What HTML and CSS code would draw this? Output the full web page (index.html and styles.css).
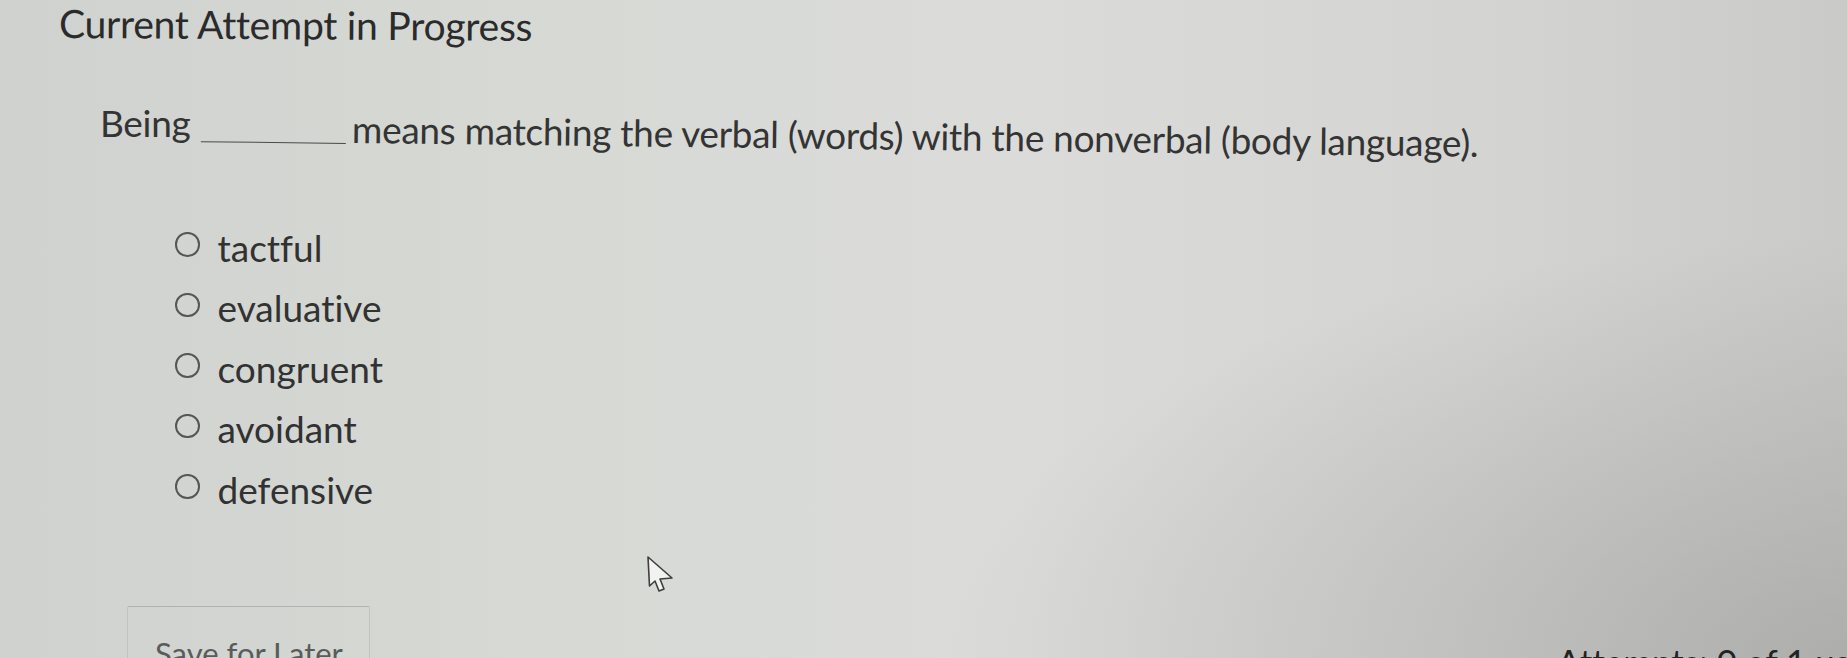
FILE: index.html
```html
<!DOCTYPE html>
<html lang="en">
<head>
<meta charset="utf-8">
<title>Current Attempt in Progress</title>
<link rel="stylesheet" href="styles.css">
</head>
<body>
<main class="page">
  <h1 class="title"><span class="title-text">Current Attempt in Progress</span></h1>
  <p class="question"><span class="lead">Being</span><span class="rest"><span class="blank"></span>means matching the verbal (words) with the nonverbal (body language).</span></p>
  <ul class="options">
    <li class="option"><span class="radio"></span><span class="label">tactful</span></li>
    <li class="option"><span class="radio"></span><span class="label">evaluative</span></li>
    <li class="option"><span class="radio"></span><span class="label">congruent</span></li>
    <li class="option"><span class="radio"></span><span class="label">avoidant</span></li>
    <li class="option"><span class="radio"></span><span class="label">defensive</span></li>
  </ul>
  <div class="footer">
    <button class="save" type="button">Save for Later</button>
    <div class="attempts">Attempts: 0 of 1 used</div>
  </div>
</main>
<svg class="cursor" width="30" height="40" viewBox="0 0 30 40" aria-hidden="true">
  <path d="M2 2 L3.5 31 L9 26 L13 36 L18 34 L14 24 L26 23 Z" fill="#f2f3f1" stroke="#3d3e3d" stroke-width="1.6" stroke-linejoin="round"/>
</svg>
</body>
</html>
```

FILE: styles.css
```css
html, body {
  margin: 0;
  padding: 0;
  height: 658px;
  overflow: hidden;
}

body {
  position: relative;
  font-family: Lato, "Open Sans", sans-serif;
  font-variant-ligatures: none;
  color: #2f302f;
  background:
    radial-gradient(ellipse 900px 420px at 1847px 658px, rgba(150,150,150,0.55), rgba(150,150,150,0) 100%),
    linear-gradient(90deg, #cfd2ce 0%, #d7d9d5 30%, #dbdcda 55%, #d4d5d2 80%, #cacac8 100%);
}

.page {
  padding-left: 59px;
}

.title {
  margin: 0;
  padding-top: 3px;
  font-size: 39px;
  line-height: 40px;
  font-weight: 400;
  color: #2a2b2a;
  letter-spacing: -0.2px;
}

.title-text {
  display: inline-block;
  transform: rotate(0.35deg);
  transform-origin: 0 50%;
}

.question {
  margin: 58px 0 0 41px;
  font-size: 37px;
  line-height: 44px;
  color: #333433;
  letter-spacing: -0.3px;
}

.rest {
  display: inline-block;
  vertical-align: -4px;
  transform: rotate(0.7deg);
  transform-origin: 0 50%;
}

.blank {
  display: inline-block;
  width: 145px;
  height: 0;
  border-bottom: 1.5px solid #4a4a4a;
  margin: 0 6px 0 11px;
  vertical-align: -1px;
}

.options {
  list-style: none;
  margin: 68px 0 0 116px;
  padding: 0;
}

.option {
  display: flex;
  align-items: center;
  height: 60.5px;
  font-size: 37px;
  color: #313231;
}

.radio {
  box-sizing: border-box;
  width: 24.5px;
  height: 24.5px;
  border: 2.4px solid #555655;
  border-radius: 50%;
  margin-right: 18px;
  margin-top: -6px;
  flex: none;
}

.footer {
  display: flex;
  align-items: flex-start;
  margin-top: 86px;
}

.save {
  box-sizing: border-box;
  width: 243px;
  height: 80px;
  margin-left: 68px;
  padding: 14px 0 0 27px;
  text-align: left;
  vertical-align: top;
  font-family: Lato, "Open Sans", sans-serif;
  font-size: 31px;
  line-height: 32px;
  color: #5a5b5a;
  background: transparent;
  border: 1px solid #c2c3c0;
  border-top-color: #b2b3b0;
  border-radius: 2px;
}

.attempts {
  margin-left: auto;
  margin-right: -220px;
  width: 510px;
  padding-top: 38px;
  font-size: 35px;
  line-height: 35px;
  color: #232323;
  white-space: nowrap;
}

.cursor {
  position: absolute;
  left: 646px;
  top: 555px;
}
```
